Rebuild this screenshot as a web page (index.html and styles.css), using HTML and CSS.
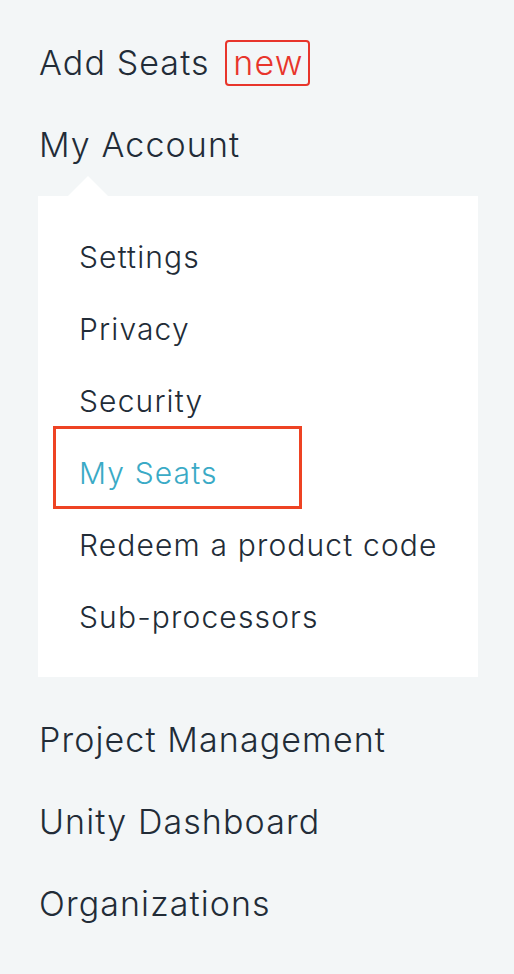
FILE: index.html
```html
<!DOCTYPE html>
<html lang="en">
<head>
<meta charset="utf-8">
<title>Account menu</title>
<link rel="stylesheet" href="styles.css">
</head>
<body>
<nav class="menu">
  <ul class="main-list">
    <li class="main-item">Add Seats <span class="badge">new</span></li>
    <li class="main-item">My Account</li>
    <li class="submenu-wrap">
      <ul class="submenu">
        <li class="sub-item">Settings</li>
        <li class="sub-item">Privacy</li>
        <li class="sub-item">Security</li>
        <li class="sub-item active"><span class="highlight"></span>My Seats</li>
        <li class="sub-item">Redeem a product code</li>
        <li class="sub-item">Sub-processors</li>
      </ul>
    </li>
    <li class="main-item after-panel">Project Management</li>
    <li class="main-item">Unity Dashboard</li>
    <li class="main-item">Organizations</li>
  </ul>
</nav>
</body>
</html>
```
FILE: styles.css
```css
html, body {
  margin: 0;
  padding: 0;
  background: #f3f6f7;
}
body {
  font-family: Inter, "Noto Sans", sans-serif;
  font-weight: 300;
  color: #222c37;
  width: 514px;
  height: 974px;
  overflow: hidden;
}
.menu {
  padding: 22px 36px 0 38px;
}
.main-list, .submenu {
  list-style: none;
  margin: 0;
  padding: 0;
}
.main-item {
  font-size: 34px;
  line-height: 82px;
  height: 82px;
  padding-left: 1px;
  letter-spacing: 1.1px;
  white-space: nowrap;
}
.badge {
  display: inline-block;
  margin-left: 5px;
  padding: 0 5px 0 6px;
  line-height: 42px;
  border: 2px solid #e8352b;
  border-radius: 4px;
  color: #e8352b;
}
.submenu-wrap {
  margin-top: 10px;
}
.submenu {
  position: relative;
  width: 440px;
  background: #ffffff;
  padding: 25px 0 24px 41px;
  box-sizing: border-box;
}
.submenu::before {
  content: "";
  position: absolute;
  top: -20px;
  left: 30px;
  border-left: 20px solid transparent;
  border-right: 20px solid transparent;
  border-bottom: 20px solid #ffffff;
}
.sub-item {
  position: relative;
  font-size: 30px;
  line-height: 72px;
  height: 72px;
  letter-spacing: 1.15px;
  white-space: nowrap;
}
.sub-item.active {
  color: #3aaac6;
}
.highlight {
  position: absolute;
  left: -26px;
  top: -11px;
  width: 249px;
  height: 83px;
  box-sizing: border-box;
  border: 3px solid #ee4323;
}
.after-panel {
  margin-top: 22px;
}
```
